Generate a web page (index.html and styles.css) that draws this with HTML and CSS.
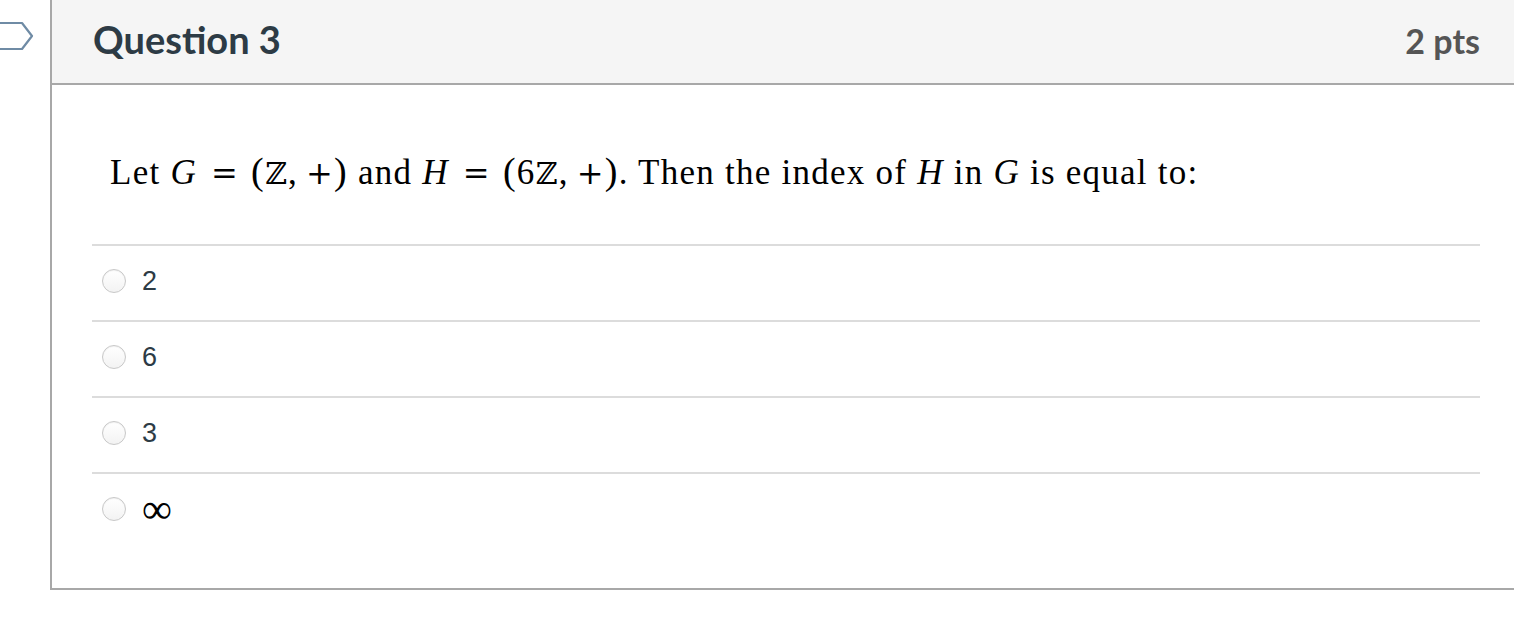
FILE: index.html
```html
<!DOCTYPE html>
<html>
<head>
<meta charset="utf-8">
<link rel="stylesheet" href="styles.css">
</head>
<body>
<div class="page">
  <svg class="bookmark" width="36" height="34" viewBox="0 0 36 34">
    <path d="M-4 2 H22 L32 15 L22 28 H-4" fill="none" stroke="#6f8ba5" stroke-width="2.2" stroke-linejoin="round"/>
  </svg>
  <div class="card">
    <div class="header">
      <span class="title">Question 3</span>
      <span class="pts">2 pts</span>
    </div>
    <div class="body">
      <p class="question">Let <i>G</i><span class="op">=</span><span class="par">(</span><span class="bb">ℤ</span>,<span class="plus">+</span><span class="par">)</span> and <i>H</i><span class="op">=</span><span class="par">(</span>6<span class="bb">ℤ</span>,<span class="plus">+</span><span class="par">)</span>. Then the index of <i>H</i> in <i>G</i> is equal to:</p>
      <div class="answers">
        <label class="answer"><span class="radio"></span><span class="atext">2</span></label>
        <label class="answer"><span class="radio"></span><span class="atext">6</span></label>
        <label class="answer"><span class="radio"></span><span class="atext">3</span></label>
        <label class="answer"><span class="radio"></span><span class="atext math">∞</span></label>
      </div>
    </div>
  </div>
</div>
</body>
</html>
```
FILE: styles.css
```css
html, body {
  margin: 0;
  padding: 0;
  background: #fff;
  overflow: hidden;
}
.page {
  position: relative;
  padding-left: 50px;
}
.bookmark {
  position: absolute;
  left: 0;
  top: 21px;
}
.card {
  border-left: 2px solid #a8a8a8;
  border-bottom: 2px solid #a8a8a8;
}
.header {
  height: 83px;
  background: #f5f5f5;
  border-bottom: 2px solid #a8a8a8;
  display: flex;
  align-items: center;
  justify-content: space-between;
  padding: 0 34px 0 41px;
  font-family: Lato, "Noto Sans", sans-serif;
  font-weight: 700;
}
.title {
  font-size: 38px;
  color: #2d3b45;
  margin-top: -6px;
}
.pts {
  font-size: 34px;
  color: #555;
  margin-top: -2px;
}
.body {
  padding: 0 34px 0 40px;
}
.question {
  margin: 0;
  padding: 62px 0 49px 18px;
  font-family: "Liberation Serif", serif;
  font-size: 35px;
  letter-spacing: 1.25px;
  line-height: 48px;
  color: #000;
  height: 48px;
  white-space: nowrap;
}
.question i {
  font-style: italic;
}
.question .op {
  font-family: "DejaVu Serif", serif;
  font-size: 32px;
  padding: 0 12px 0 14px;
}
.question .plus {
  font-family: "DejaVu Serif", serif;
  font-size: 32px;
  padding-left: 8px;
}
.question .bb {
  font-family: "DejaVu Serif", serif;
  font-size: 30px;
}
.question .par {
  font-size: 38px;
}
.answer {
  display: flex;
  align-items: center;
  height: 74px;
  border-top: 2px solid #dcdcdc;
}
.answer > * {
  margin-top: -4px;
}
.answers {
  padding-bottom: 40px;
}
.radio {
  width: 22px;
  height: 22px;
  border-radius: 50%;
  border: 1px solid #c8c8c8;
  background: linear-gradient(#fff, #f3f3f3);
  box-shadow: inset 0 1px 1px rgba(0,0,0,0.06);
  margin-left: 10px;
  margin-right: 16px;
}
.atext {
  font-family: "Liberation Sans", Arial, sans-serif;
  font-size: 27px;
  color: #2d3b45;
}
.atext.math {
  font-family: "Liberation Serif", serif;
  font-size: 42px;
  color: #000;
}
```
